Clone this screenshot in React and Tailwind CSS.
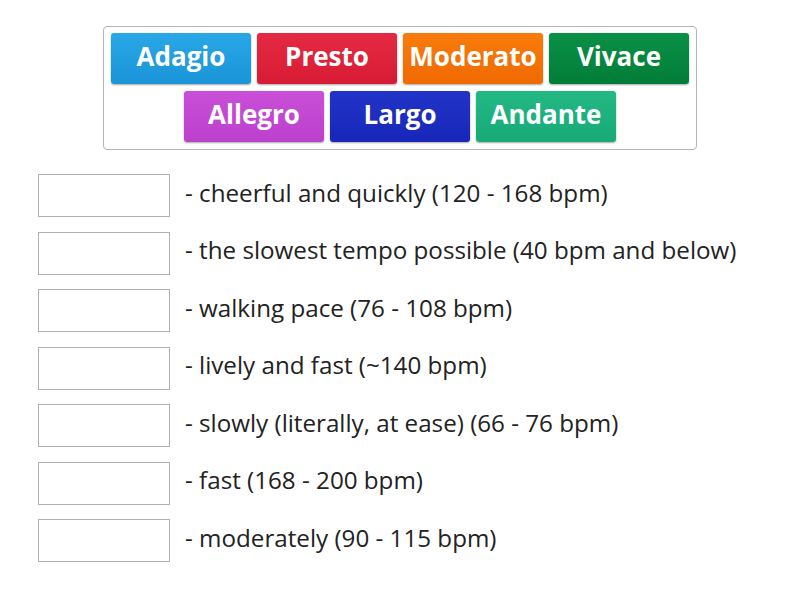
import React from "react";

const tiles = [
  ["Adagio", "from-[#28a7e6] to-[#1a95d8]"],
  ["Presto", "from-[#e42a42] to-[#d81b34]"],
  ["Moderato", "from-[#f87c0c] to-[#f06a00]"],
  ["Vivace", "from-[#0a9046] to-[#027d37]"],
  ["Allegro", "from-[#c94fd8] to-[#bb40cc]"],
  ["Largo", "from-[#2234c8] to-[#1726b8]"],
  ["Andante", "from-[#22b884] to-[#17aa76]"],
];

const rows = [
  "- cheerful and quickly (120 - 168 bpm)",
  "- the slowest tempo possible (40 bpm and below)",
  "- walking pace (76 - 108 bpm)",
  "- lively and fast (~140 bpm)",
  "- slowly (literally, at ease) (66 - 76 bpm)",
  "- fast (168 - 200 bpm)",
  "- moderately (90 - 115 bpm)",
];

function Tile({ label, cls }) {
  return (
    <div
      className={`w-[140px] h-[51px] rounded-[3px] bg-gradient-to-b ${cls} flex items-center justify-center text-white font-bold text-[26px] leading-none pb-[5px] shadow-[0_1px_2px_rgba(0,0,0,0.35)]`}
    >
      {label}
    </div>
  );
}

export default function App() {
  return (
    <div
      className="w-[800px] h-[600px] bg-white text-[#222]"
      style={{ fontFamily: '"Open Sans", sans-serif' }}
    >
      <div className="pt-[26px] flex justify-center">
        <div className="w-[594px] border border-[#b5b5b5] rounded-[4px] px-[7px] pt-[6px] pb-[7px] flex flex-wrap justify-center gap-x-[6px] gap-y-[7px]">
          {tiles.map(([l, c]) => (
            <Tile key={l} label={l} cls={c} />
          ))}
        </div>
      </div>
      <div className="mt-[24px] pl-[38px] flex flex-col gap-[14.5px]">
        {rows.map((r) => (
          <div key={r} className="flex items-center">
            <div className="w-[132px] h-[43px] border border-[#b0b0b0] bg-white shrink-0" />
            <div className="ml-[15px] text-[24.2px] leading-none pb-[5px]">{r}</div>
          </div>
        ))}
      </div>
    </div>
  );
}
